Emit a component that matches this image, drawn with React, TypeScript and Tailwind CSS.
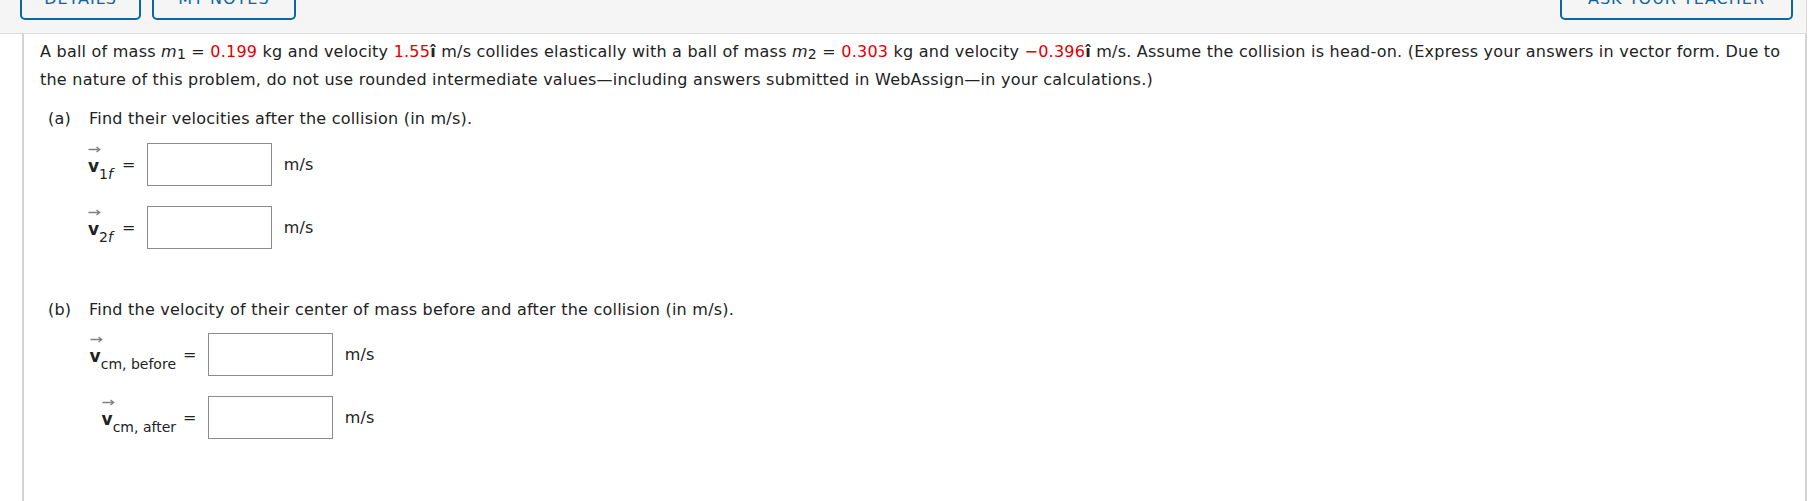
import type { ReactNode } from 'react'

const font = { fontFamily: '"DejaVu Sans", Verdana, sans-serif' }

function Red({ children }: { children: ReactNode }) {
  return <span className="text-[#e00000]">{children}</span>
}

function Hat() {
  return <span className="font-bold">î</span>
}

function VecArrow() {
  return (
    <svg className="absolute left-0 -top-[12px]" width="13" height="7" viewBox="0 0 13 7">
      <path d="M0.5 3.5H11.5M8.5 1L11.8 3.5L8.5 6" fill="none" stroke="#808080" strokeWidth="1.3" />
    </svg>
  )
}

function Vec({ sub }: { sub: ReactNode }) {
  return (
    <span className="inline-flex items-end whitespace-nowrap tracking-normal">
      <span className="relative inline-block font-bold text-[17px] leading-none">
        <VecArrow />
        v
      </span>
      <span className="text-[14px] leading-none translate-y-[6px]">{sub}</span>
    </span>
  )
}

function AnswerRow({
  label,
  labelWidth,
  align,
}: {
  label: ReactNode
  labelWidth: string
  align: string
}) {
  return (
    <div className="flex items-center h-[43px]">
      <div className={`${labelWidth} flex ${align} pt-[4px]`}>{label}</div>
      <span className="text-[16px] leading-none">=</span>
      <div className="ml-[11px] w-[125px] h-[43px] border border-[#8c8c8c] bg-white" />
      <span className="ml-[12px]">m/s</span>
    </div>
  )
}

const btn =
  'h-[44px] border-2 border-[#0d66a2] rounded-[5px] flex items-end justify-center pb-[11px] text-[16px] tracking-[1px] text-[#0d66a2] leading-none'

export default function App() {
  return (
    <div className="w-[1810px] h-[501px] bg-white text-[#222] overflow-hidden" style={font}>
      {/* top bar with cut-off buttons */}
      <div className="w-[1807px] h-[34px] bg-[#f5f5f5] border-b border-[#dcdcdc] border-r flex items-end pb-[13px]">
        <div className={`ml-[20px] w-[121px] ${btn}`}>DETAILS</div>
        <div className={`ml-[11px] w-[144px] ${btn}`}>MY NOTES</div>
        <div className={`ml-auto mr-[13px] w-[233px] ${btn}`}>ASK YOUR TEACHER</div>
      </div>

      {/* question panel */}
      <div className="ml-[22px] w-[1785px] h-[467px] border-l-2 border-r-2 border-[#d4d4d4] pl-[16px] pt-[4px] text-[16px] leading-[28px] tracking-[0.23px]">
        <p className="pr-[10px]">
          A ball of mass <i>m</i>
          <sub className="text-[14px] relative top-[2px]">1</sub> = <Red>0.199</Red> kg and velocity{' '}
          <Red>1.55</Red>
          <Hat /> m/s collides elastically with a ball of mass <i>m</i>
          <sub className="text-[14px] relative top-[2px]">2</sub> = <Red>0.303</Red> kg and velocity{' '}
          <Red>−0.396</Red>
          <Hat /> m/s. Assume the collision is head-on. (Express your answers in vector form. Due to the nature of
          this problem, do not use rounded intermediate values—including answers submitted in WebAssign—in your
          calculations.)
        </p>

        {/* part a */}
        <div className="mt-[11px] flex pl-[8px]">
          <span className="w-[41px]">(a)</span>
          <span>Find their velocities after the collision (in m/s).</span>
        </div>
        <div className="ml-[48px] mt-[10px] flex flex-col gap-[20px]">
          <AnswerRow
            labelWidth="w-[34px]"
            align="justify-start"
            label={
              <Vec
                sub={
                  <>
                    1<i>f</i>
                  </>
                }
              />
            }
          />
          <AnswerRow
            labelWidth="w-[34px]"
            align="justify-start"
            label={
              <Vec
                sub={
                  <>
                    2<i>f</i>
                  </>
                }
              />
            }
          />
        </div>

        {/* part b */}
        <div className="mt-[47px] flex pl-[8px]">
          <span className="w-[41px]">(b)</span>
          <span>Find the velocity of their center of mass before and after the collision (in m/s).</span>
        </div>
        <div className="ml-[48px] mt-[9px] flex flex-col gap-[20px]">
          <AnswerRow labelWidth="w-[95px] pr-[7px]" align="justify-end" label={<Vec sub="cm, before" />} />
          <AnswerRow labelWidth="w-[95px] pr-[7px]" align="justify-end" label={<Vec sub="cm, after" />} />
        </div>
      </div>
    </div>
  )
}
